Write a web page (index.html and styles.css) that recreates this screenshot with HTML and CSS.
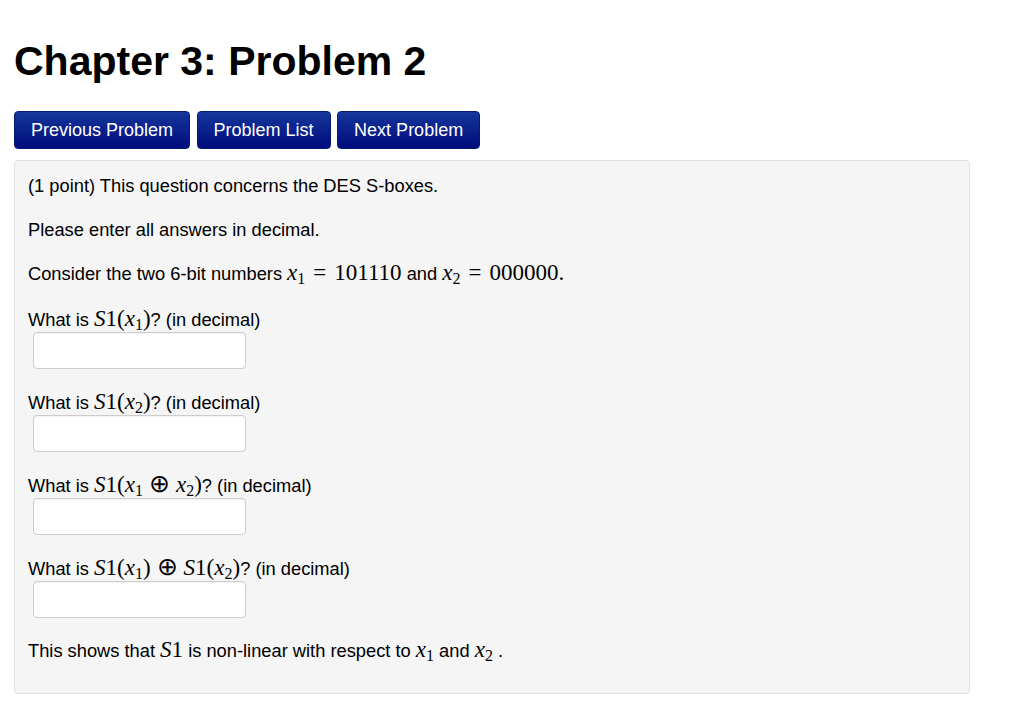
FILE: index.html
```html
<!DOCTYPE html>
<html lang="en">
<head>
    <meta charset="UTF-8">
    <meta name="viewport" content="width=device-width, initial-scale=1.0">
    <title>Chapter 3: Problem 2</title>
    <link rel="stylesheet" href="styles.css">
</head>
<body>
    <h1 class="title">Chapter 3: Problem 2</h1>

    <div class="nav">
        <a class="nav-btn" href="#">Previous Problem</a>
        <a class="nav-btn" href="#">Problem List</a>
        <a class="nav-btn" href="#">Next Problem</a>
    </div>

    <div class="problem">
        <p>(1 point) This question concerns the DES S-boxes.</p>
        <p>Please enter all answers in decimal.</p>
        <p>Consider the two 6-bit numbers <span class="math"><i>x</i><sub>1</sub><span class="op">=</span>101110</span> and <span class="math"><i>x</i><sub>2</sub><span class="op">=</span>000000.</span></p>

        <div class="question">
            <label>What is <span class="math"><i>S</i>1(<i>x</i><sub>1</sub>)</span>? (in decimal)</label>
            <input class="answer" type="text">
        </div>

        <div class="question">
            <label>What is <span class="math"><i>S</i>1(<i>x</i><sub>2</sub>)</span>? (in decimal)</label>
            <input class="answer" type="text">
        </div>

        <div class="question">
            <label>What is <span class="math"><i>S</i>1(<i>x</i><sub>1</sub><span class="bin">&#8853;</span><i>x</i><sub>2</sub>)</span>? (in decimal)</label>
            <input class="answer" type="text">
        </div>

        <div class="question">
            <label>What is <span class="math"><i>S</i>1(<i>x</i><sub>1</sub>)<span class="bin">&#8853;</span><i>S</i>1(<i>x</i><sub>2</sub>)</span>? (in decimal)</label>
            <input class="answer" type="text">
        </div>

        <p>This shows that <span class="math"><i>S</i>1</span> is non-linear with respect to <span class="math"><i>x</i><sub>1</sub></span> and <span class="math"><i>x</i><sub>2</sub></span> .</p>
    </div>
</body>
</html>
```

FILE: styles.css
```css
body {
    font-family: "Liberation Sans", Arial, sans-serif;
    font-size: 18.3px;
    color: #000;
    background-color: #fff;
    margin: 0;
    padding: 0 14px;
}

.title {
    font-size: 41px;
    font-weight: bold;
    line-height: 44px;
    margin: 39px 0 28px;
}

.nav {
    display: flex;
    gap: 6.5px;
    margin-bottom: 11px;
}

.nav-btn {
    display: block;
    height: 38px;
    line-height: 36px;
    padding: 0 16px;
    box-sizing: border-box;
    color: #fff;
    font-size: 18px;
    text-decoration: none;
    background: linear-gradient(to bottom, #15379c, #000c7c);
    border: 1px solid #061a78;
    border-radius: 4px;
}

.problem {
    width: 956px;
    box-sizing: border-box;
    background-color: #f5f5f5;
    border: 1px solid #e0e0e0;
    border-radius: 4px;
    padding: 12px 13px;
}

.problem p {
    height: 26px;
    margin: 0 0 18px;
    line-height: 26px;
}

.question {
    margin-bottom: 19px;
}

.question label {
    display: block;
    height: 27px;
    line-height: 29px;
}

.question + p {
    line-height: 28px;
}

.answer {
    display: block;
    width: 213px;
    height: 37px;
    box-sizing: border-box;
    margin-left: 5px;
    border: 1px solid #cccccc;
    border-radius: 4px;
    background-color: #fff;
    box-shadow: inset 0 1px 1px rgba(0, 0, 0, 0.05);
}

.math {
    font-family: "Liberation Serif", "Times New Roman", serif;
    font-size: 23px;
    line-height: 20px;
}

.math sub {
    font-size: 16px;
    line-height: 0;
    vertical-align: -4px;
}

.math .op {
    margin: 0 8px;
}

.math .bin {
    font-size: 25px;
    margin: 0 6px;
}
```
